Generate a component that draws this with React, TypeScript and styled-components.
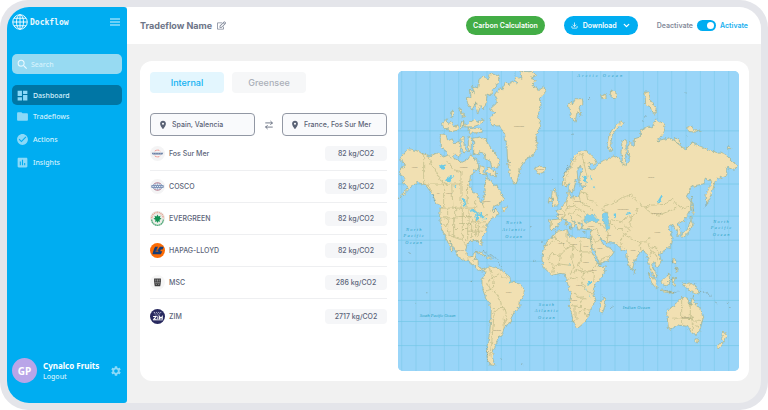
import React, { useState } from "react";
import styled, { createGlobalStyle } from "styled-components";
import { ArrowRightLeft, ChevronDown, Download } from "lucide-react";
import {
  MdAssessment,
  MdCheckCircle,
  MdDashboard,
  MdFolder,
  MdLocationOn,
  MdSearch,
  MdSettings,
} from "react-icons/md";
import { FaRegEdit } from "react-icons/fa";

const Global = createGlobalStyle`
  *, *::before, *::after { box-sizing: border-box; }
  body { margin: 0; background: #fff; font-family: Inter, "Liberation Sans", sans-serif; color: #5b6478; }
  button, input { font: inherit; color: inherit; margin: 0; }
  button { border: 0; padding: 0; background: none; cursor: pointer; }
  a { color: inherit; text-decoration: none; }
  svg { display: block; flex: none; }
`;

const Frame = styled.div`
  min-height: 100vh;
  padding: 7px;
  display: flex;
  border-radius: 28px;
  background: #e4e5ea;
`;

const Screen = styled.div`
  flex: 1;
  display: flex;
  border-radius: 22px;
  overflow: hidden;
  background: #f1f1f1;
`;

const Sidebar = styled.aside`
  width: 120px;
  flex: none;
  display: flex;
  flex-direction: column;
  padding: 5px;
  border-radius: 0 3px 3px 0;
  background: #00adf1;
  color: #d3f1fd;
  font-family: "Noto Sans", "Open Sans", sans-serif;
  font-size: 7px;
  font-weight: 500;
`;

const BrandRow = styled.div`
  display: flex;
  align-items: center;
  height: 20px;
  padding-right: 2px;
`;

const Brand = styled.a`
  flex: 1;
  display: flex;
  align-items: center;
  gap: 2px;
  color: #e9f8fe;
  font-family: "DejaVu Sans Mono", monospace;
  font-size: 8px;
  font-weight: 700;
`;

const IconButton = styled.button`
  display: flex;
  align-items: center;
  justify-content: center;
`;

const SearchBox = styled.label`
  display: flex;
  align-items: center;
  gap: 2px;
  height: 20px;
  margin-top: 22px;
  padding: 0 4px;
  border-radius: 5px;
  background: #97daf2;
  color: #e9f8fe;
`;

const SearchInput = styled.input`
  flex: 1;
  min-width: 0;
  border: 0;
  padding: 0;
  outline: 0;
  background: none;
  &::placeholder { color: #d6f3fd; opacity: 1; }
`;

const Nav = styled.nav`
  display: flex;
  flex-direction: column;
  margin-top: 11px;
`;

const NavLink = styled.a<{ $active?: boolean }>`
  display: flex;
  align-items: center;
  gap: 4px;
  height: ${(p) => (p.$active ? 20 : 23)}px;
  padding: 0 4px;
  border-radius: 5px;
  background: ${(p) => (p.$active ? "#0076a5" : "transparent")};
  svg { color: #8bd9f8; }
`;

const Account = styled.div`
  display: flex;
  align-items: center;
  gap: 6px;
  margin-top: auto;
  margin-bottom: 15px;
`;

const Avatar = styled.span`
  width: 25px;
  height: 25px;
  flex: none;
  border-radius: 50%;
  display: flex;
  align-items: center;
  justify-content: center;
  background: #b9a5e8;
  color: #fff;
  font-size: 10px;
  font-weight: 700;
`;

const AccountText = styled.div`
  flex: 1;
  display: flex;
  flex-direction: column;
  line-height: 11px;
  white-space: nowrap;
  strong { color: #fff; font-size: 8px; font-weight: 700; }
`;

const Content = styled.div`
  flex: 1;
  min-width: 0;
  display: flex;
  flex-direction: column;
`;

const TopBar = styled.header`
  display: flex;
  align-items: center;
  height: 37px;
  padding: 0 13px;
  background: #fff;
`;

const Title = styled.h1`
  margin: 0 5px 0 0;
  font-size: 9px;
  font-weight: 700;
  color: #6d7588;
`;

const Actions = styled.div`
  display: flex;
  align-items: center;
  gap: 19px;
  margin-left: auto;
`;

const PillButton = styled.button<{ $color: string; $pad: number }>`
  display: flex;
  align-items: center;
  gap: 5px;
  height: 19px;
  padding: 0 ${(p) => p.$pad}px;
  border-radius: 10px;
  background: ${(p) => p.$color};
  color: #fff;
  font-size: 7px;
  font-weight: 600;
`;

const Toggle = styled.label`
  display: flex;
  align-items: center;
  gap: 4px;
  font-size: 7px;
  font-weight: 600;
  color: #858c9b;
`;

const Switch = styled.input`
  appearance: none;
  display: flex;
  align-items: center;
  width: 19px;
  height: 11px;
  padding: 0 2px;
  border-radius: 6px;
  background: #c9cdd5;
  &::before { content: ""; width: 7px; height: 7px; border-radius: 50%; background: #fff; }
  &:checked { background: #00adf1; justify-content: flex-end; }
`;

const ActiveWord = styled.span`
  color: #19b0ef;
`;

const Card = styled.main`
  flex: 1;
  display: grid;
  grid-template-columns: 237fr 341fr;
  gap: 11px;
  margin: 17px 12px 22px 13px;
  padding: 10px;
  border-radius: 12px;
  background: #fff;
`;

const Panel = styled.section`
  display: flex;
  flex-direction: column;
  min-width: 0;
`;

const Tabs = styled.div`
  display: flex;
  gap: 8px;
  padding-top: 1px;
`;

const Tab = styled.button<{ $on: boolean }>`
  width: 74px;
  height: 21px;
  border-radius: 4px;
  background: ${(p) => (p.$on ? "#e3f6fe" : "#f6f7f8")};
  color: ${(p) => (p.$on ? "#12b1f2" : "#abb0b9")};
  font-size: 9px;
  font-weight: 500;
`;

const Route = styled.div`
  display: flex;
  align-items: center;
  justify-content: space-between;
  gap: 8px;
  margin-top: 20px;
  color: #596275;
`;

const Field = styled.label`
  flex: 0 1 105px;
  min-width: 0;
  display: flex;
  align-items: center;
  gap: 4px;
  height: 23px;
  padding: 0 7px;
  border: 1px solid #9298a4;
  border-radius: 4px;
  background: #f9fafc;
`;

const FieldInput = styled.input`
  flex: 1;
  min-width: 0;
  border: 0;
  padding: 0;
  outline: 0;
  background: none;
  font-size: 7px;
  font-weight: 500;
`;

const Table = styled.table`
  width: 100%;
  margin-top: 2px;
  border-collapse: collapse;
  font-size: 7px;
  font-weight: 500;
`;

const Row = styled.tr`
  height: 32px;
  border-bottom: 1px solid #eeeff1;
  &:last-child { height: 37px; border-bottom: 0; }
`;

const CarrierCell = styled.th`
  padding: 0;
  font-weight: 500;
  text-align: left;
`;

const Carrier = styled.span`
  display: flex;
  align-items: center;
  gap: 4px;
`;

const ValueCell = styled.td`
  padding: 0;
`;

const Value = styled.span`
  display: flex;
  align-items: center;
  justify-content: center;
  width: 62px;
  height: 15px;
  margin-left: auto;
  border-radius: 4px;
  background: #f5f6f8;
`;

const MapFrame = styled.figure`
  margin: 0;
  min-width: 0;
  border-radius: 5px;
  overflow: hidden;
  background: #99d5f8;
  svg { width: 100%; height: 100%; }
`;

const Globe = () => (
  <svg width="16" height="16" viewBox="0 0 32 32" fill="none" stroke="#fff" strokeWidth="1.8">
    <circle cx="16" cy="16" r="14.5" />
    <ellipse cx="16" cy="16" rx="7" ry="14.5" />
    <path d="M16 1.5v29M1.5 16h29M4 8.5h24M4 23.5h24" />
  </svg>
);

const Burger = () => (
  <svg width="10" height="8" viewBox="0 0 10 8" stroke="#d8f3fe" strokeWidth="1.2">
    <path d="M0 1h10M0 4h10M0 7h10" />
  </svg>
);

const logos: Record<string, React.ReactNode> = {
  fos: (
    <>
      <circle cx="22" cy="22" r="22" fill="#f4f4f5" />
      <path d="M14 15q8-6 16 0M14 29q8 6 16 0" fill="none" stroke="#ee7b72" strokeWidth="2.6" strokeDasharray="6 2" />
      <path d="M5 20h34l-3 5H8z" fill="#5b739c" />
      <path d="M9 22.5h27" stroke="#dfe5ef" strokeWidth="1.4" strokeDasharray="3 2" />
    </>
  ),
  cosco: (
    <>
      <circle cx="22" cy="22" r="22" fill="#f4f4f5" />
      <ellipse cx="22" cy="22" rx="14" ry="11" fill="#dfe6f1" stroke="#7f94b8" strokeWidth="2" />
      <path d="M12 14q10-7 20 0M12 30q10 7 20 0" fill="none" stroke="#e78d8f" strokeWidth="2.2" />
      <path d="M15 12v20M22 11v22M29 12v20" stroke="#7f94b8" strokeWidth="1.5" />
      <path d="M4 18h36v8H4z" fill="#6680aa" />
      <path d="M7 22h30" stroke="#e7ecf5" strokeWidth="3" strokeDasharray="4 2.5" />
    </>
  ),
  evergreen: (
    <>
      <circle cx="22" cy="22" r="22" fill="#eceee8" />
      <path d="M5 21a17 17 0 0 1 34 0" fill="none" stroke="#e8a598" strokeWidth="5" strokeDasharray="3 2" />
      <path d="M5 25a17 17 0 0 0 34 0" fill="none" stroke="#5aae82" strokeWidth="4" strokeDasharray="5 1" />
      <path d="m22 10 3 6 6-2-2 6 5 3-6 3 1 6-5-2-2 6-2-6-5 2 1-6-6-3 5-3-2-6 6 2z" fill="#149253" />
    </>
  ),
  hapag: (
    <>
      <circle cx="22" cy="22" r="22" fill="#fb6b05" />
      <path d="M15 11h9l-4 8h3l-3 6h3l-3 8H7l2-7 3-9zM29 11h11l-3 8h-5l-2 5h6l-4 9H19l3-9 3-7z" fill="#173e78" />
      <path d="m25 10-8 15h8" fill="none" stroke="#fb6b05" strokeWidth="1.4" />
    </>
  ),
  msc: (
    <>
      <circle cx="22" cy="22" r="22" fill="#f6f6f6" />
      <path d="M12 10h20v12l-2 11H14l-2-11z" fill="#3c3c3d" />
      <path d="M17 13v6m5-6v6m5-6v6M13 23h18M17 28h3m4 0h3" stroke="#e2e2e2" strokeWidth="1.5" />
    </>
  ),
  zim: (
    <>
      <circle cx="22" cy="22" r="22" fill="#28295f" />
      <path d="M11 10h4m3 0h3m3 0h3m3 0h3M13 14h3m4 0h3m4 0h3M16 18h3m4 0h3" stroke="#d9dbec" strokeWidth="2.4" />
      <path d="M9 22h9l-7 8h8M23 31v-10M28 31v-9l4 5 4-5v9" fill="none" stroke="#fff" strokeWidth="3" />
      <path d="M9 32h28" stroke="#fff" strokeWidth="2.4" />
    </>
  ),
};

const Logo = ({ id }: { id: string }) => (
  <svg width="15" height="15" viewBox="0 0 44 44" aria-hidden="true">
    {logos[id]}
  </svg>
);

const land = [
  // North America
  "M28 325L45 318 30 300 40 280 58 268 75 272 95 280 118 290 140 280 160 292 175 286 195 298 215 308 232 300 242 285 250 298 262 300 265 325 250 335 240 352 236 375 245 395 262 405 272 430 278 433 278 415 285 395 282 370 288 352 300 362 310 378 318 372 328 395 340 415 328 432 310 440 302 456 318 448 326 462 310 472 298 480 290 498 286 515 273 533 275 558 268 552 263 541 250 542 232 548 226 568 232 587 245 590 252 578 260 580 252 597 263 601 264 619 275 629 285 627 282 634 268 631 255 622 240 608 224 602 205 590 192 568 178 540 188 572 182 572 168 535 155 512 150 490 148 470 150 443 135 422 120 395 105 375 85 368 68 372 60 385 42 403 22 418 45 393 52 380 36 370 44 356 28 342Z",
  // South America
  "M285 628L295 618 310 622 330 628 345 640 358 650 362 665 385 672 403 685 400 705 390 720 388 742 372 755 362 775 352 797 342 800 337 820 325 835 318 850 310 868 306 890 314 916 300 914 290 890 290 860 298 820 302 770 303 740 285 710 275 682 275 660 282 645Z",
  // Greenland
  "M298 150L318 132 316 105 330 85 336 95 345 68 358 78 365 65 380 74 372 47 395 60 392 34 425 34 438 48 420 58 438 62 425 78 444 92 460 80 466 96 450 115 452 140 442 170 450 195 438 230 440 262 430 285 405 300 390 325 380 368 370 370 360 350 352 310 350 265 342 218 325 200 305 195 298 178 314 160Z",
  // Canadian archipelago
  "M240 92L252 100 246 78 262 86 266 60 280 48 290 62 300 42 325 50 325 70 308 90 302 108 290 104 288 125 280 150 270 142 262 164 256 130 245 152 232 132 228 115 242 112Z",
  "M218 188L230 196 252 180 262 188 278 178 276 192 248 202 222 202Z",
  "M232 207L272 206 276 218 240 221Z",
  "M250 236L270 232 290 244 300 266 314 280 326 302 322 325 304 322 300 305 284 298 286 284 268 276 262 288 250 280Z",
  "M150 226L168 228 172 244 186 238 190 250 206 246 210 270 208 292 192 286 182 296 164 272 150 262Z",
  "M212 236L222 232 220 252 230 274 220 280 212 262ZM234 232L244 236 242 268 234 276Z",
  "M156 190L170 178 172 192 186 188 190 202 202 196 204 212 180 216 170 206 160 208Z",
  "M205 144L216 150 212 160 226 168 216 172ZM182 154L190 152 188 172 180 170ZM212 190L220 186 218 206 210 208Z",
  "M270 318L282 322 278 336 290 346 276 344 266 334ZM296 322L318 340 318 352 300 344 284 336Z",
  "M336 448L348 438 346 452 336 456Z",
  // Iceland, Svalbard and the Russian Arctic islands
  "M433 325L450 318 463 325 460 338 445 343Z",
  "M534 132L544 126 546 136 556 118 576 118 578 132 566 142 572 168 560 158 554 188 540 170Z",
  "M632 110L644 104 648 114 636 120ZM660 92L672 96 684 104 674 118 662 112Z",
  "M764 98L776 98 780 122 800 150 794 164 784 158 780 142 766 136Z",
  "M695 184L698 190 674 214 664 234 660 258 668 272 656 272 650 256 656 226 670 204Z",
  "M892 204L904 200 912 212 930 214 920 218 896 216ZM1012 262L1022 262 1020 270 1012 270Z",
  // Britain and Ireland
  "M486 392L496 388 498 404 506 430 500 438 482 440 490 424 484 410ZM476 414L486 412 484 426 474 430Z",
  // Eurasia
  "M478 480L505 478 498 454 512 448 518 435 530 422 530 398 538 396 540 412 565 410 570 395 588 378 570 380 565 360 575 330 570 320 560 336 562 352 555 368 552 388 544 400 536 388 536 372 524 382 516 374 518 350 535 325 550 290 570 272 590 274 612 294 620 308 612 318 596 308 598 326 612 330 622 314 640 302 670 290 690 298 700 322 692 280 695 245 706 240 708 285 704 318 717 302 712 262 718 248 732 262 732 238 750 232 752 212 775 200 786 202 796 178 818 192 825 204 818 222 800 244 835 235 862 252 885 270 905 250 930 260 965 275 1005 285 1040 318 1032 332 1005 322 1010 345 975 362 966 395 950 434 947 405 964 366 945 355 940 372 905 380 888 410 902 426 900 450 885 478 864 492 872 520 864 530 856 505 840 495 834 502 848 535 840 560 820 575 807 580 813 605 800 622 790 608 784 614 800 648 792 652 778 620 772 592 760 570 750 575 732 602 725 630 715 615 708 575 695 568 675 550 650 548 635 538 622 524 640 555 655 562 672 575 655 600 628 612 615 580 600 550 600 530 605 510 580 508 574 492 566 488 574 510 564 510 555 487 540 470 556 494 548 502 530 480 515 478 500 498 492 510 480 508Z",
  // Africa
  "M495 515L530 510 536 528 556 536 566 530 600 537 605 575 618 602 626 620 648 618 642 640 618 668 608 690 616 722 600 750 585 785 565 802 554 800 546 770 537 735 542 700 528 660 525 642 510 640 485 646 462 624 455 600 457 575 470 545 488 532Z",
  "M642 712L646 728 636 762 628 754 630 732Z",
  // Australia, Tasmania and New Zealand
  "M828 750L855 732 862 722 875 712 892 714 892 726 902 734 906 708 915 730 932 748 938 775 928 812 915 822 900 812 892 796 885 798 862 794 838 808 834 800Z",
  "M914 836L924 836 922 848 914 846ZM997 814L1010 826 1002 846 994 838ZM994 844L1000 850 984 866 978 860Z",
  // South-East Asia
  "M774 640L790 655 804 682 798 686 784 668ZM812 664L836 642 838 660 830 678 816 674ZM810 690L830 692 850 696 850 700 812 694ZM845 656L856 654 850 664 856 678 848 678Z",
  "M876 668L890 674 904 670 918 682 928 702 910 698 898 692 890 682 878 676ZM848 592L856 600 856 612 848 606ZM854 620L864 626 860 638Z",
  // Japan, Sakhalin and Sri Lanka
  "M905 452L916 458 906 468ZM904 470L908 490 896 516 884 526 876 532 874 524 892 508ZM904 412L910 440 906 452 904 430ZM732 628L736 636 732 640Z",
  // Caribbean
  "M255 574L275 578 288 588 272 584ZM290 590L305 592 300 598 290 596Z",
  // Sicily, Sardinia, Crete and Novosibirsk coast
  "M536 502L546 502 544 508ZM526 484L530 484 530 498 524 496ZM572 516L582 516ZM852 236L866 238 868 252 856 250Z",
];

const borders = [
  "M100 280V372L116 380 124 396M116 290L122 312 134 330 150 362 172 374M172 304L190 330 212 336 212 372M106 373H212M160 373V445M184 373L188 445M212 372V445M232 373L230 445M150 445H254L262 458 280 470 296 462M256 420L256 445M276 433L282 446",
  "M172 445V470M196 445V470M216 445V482M236 448V500M150 474H206M206 470H244M206 494H246M190 474V532M158 490L176 514V526M172 474V500M216 482V540M232 500V542M244 470V534M256 478V530M190 506H232M232 514H276M176 526L196 534 212 538 226 556M262 474L266 500 284 502M264 500V528M246 486H286",
  "M232 600L240 592M252 600L246 606M296 622L306 652 292 668 300 688 282 696M310 652L328 640 336 652 356 650M300 688L318 700 330 720 334 742 344 746 352 774 342 792M304 740L316 752 334 742M312 752L308 800 304 850 298 890M338 772L342 800M306 652L310 680 300 688",
  "M512 448L524 464 516 478M530 420L528 444 524 464M528 444L546 440 556 450 548 462 534 464M548 412L550 438 566 442M566 408L572 430 590 436 606 452M570 396L588 400 592 420 610 424 622 440M556 450L578 452 586 464M556 464L572 470 576 488M524 382L528 350 548 310 562 288 578 282M574 280L582 316 590 350 586 374M484 482L482 506M505 478L514 482",
  "M636 456L642 438 668 432 694 414 720 406 744 428 762 442 786 436 824 434 846 418 862 438 876 444 896 440M762 442L780 458 806 466 836 454 858 442M636 456L656 458M636 482L656 494 666 480 690 488 706 476 730 466 744 446M662 490L680 506 692 506 702 524 720 512 700 494M650 548L654 520 640 500 620 486M695 568L690 540 704 524M702 524L722 536 744 546 770 546 780 530M748 546L752 572M772 548L780 572 796 580 804 604M784 572L780 594M780 560L800 566 806 582M604 512L618 504 626 522M602 530L618 546 628 540M628 612L636 594 656 590M730 466L716 490 726 506",
  "M486 530L498 536 470 556 458 560M498 536L530 566 510 586 486 580 470 600M530 512V546L548 556M530 566L548 558 570 576 572 540M572 576H604M548 558L544 600 552 620 540 640M510 586L506 612 492 616 486 642M472 600L492 616M570 576L572 600 564 616 580 636 604 634 620 608M506 612L540 616M540 640L562 630 580 636M528 660L548 652 562 656M604 634L612 646 610 666M580 636L576 664 584 690 608 700M542 700H556L562 712 584 710M540 736L570 740 572 716 590 716M554 736V766L562 778 546 784M562 760L580 748 598 750M580 748L590 770",
  "M874 714V790M874 774H906M900 728V774L906 782 936 784M906 774V810M846 774H906M906 790L926 800",
];

const lakes =
  "M148 318l10-6 10 4-8 6-2 8-10-2zM168 358l12-8 12 0-8 8-4 10-12-2zM186 378l12-2-2 8zM216 414l8 2 4 22-6 4zM240 452l12-2 12 10-12 2zM254 464l8-2 2 18-6 2zM266 462l10-2 2 14-6 2zM276 478l14-4 0 4zM578 350l6-2 6 8-2 14-6-2zM600 350l4 0 2 12-4 2zM538 372l4 0 0 10zM610 378l4 4-2 4zM801 426l12-20 4 0-6 18-8 8zM704 464l18-6-2 4-14 4zM594 664l8-2 0 10-8 2zM586 680l4 14-2 0zM596 700l4 14-2 0zM670 462l8-2 2 8-8 4zM534 612l4 2-2 4zM358 664l6 0 0 6-6 0z";

const specks =
  "M120 395l6 14 4 10 8 12M22 418l-2 4M290 860l2 30 4 14 8 10M330 896l8 2M394 910l6 4M55 578l6 6M244 664h4M420 500l6 2M428 600l8 2M452 546l8 2M660 742l12-2M828 692l22 6 14-2M842 660l6-10M844 600l10 16 6 12M928 690l24 10 14 14M972 720l8 12M1008 730h8M1016 744h8M914 668l6 4M940 448l10-20M596 118h4M278 570l16 14 14 6 20 10M322 606l12 14M482 355l2 2M756 180l4 6M766 168l2 6M546 224h2M890 225l4 4M886 100h2M438 232l-4 20M354 300l6 20M518 350l8-14 10-20M544 502l4 0M634 705l4 4M316 448l-6 12M76 730h3M108 698h3";

const meridians = Array.from({ length: 24 }, (_, i) => 34 + Math.round(i * 42.65));
const parallels = [214, 373, 469, 541, 604, 663, 721, 784, 856];

const seaNames: [number, number, string, number][] = [
  [628, 53, "Arctic Ocean", 6],
  [70, 512, "North", 4],
  [70, 532, "Pacific", 4],
  [70, 552, "Ocean", 4],
  [370, 493, "North", 4],
  [370, 513, "Atlantic", 4],
  [370, 533, "Ocean", 4],
  [142, 770, "South Pacific Ocean", 0],
  [468, 737, "South", 4],
  [468, 757, "Atlantic", 4],
  [468, 777, "Ocean", 4],
  [738, 748, "Indian Ocean", 1],
  [992, 488, "North", 4],
  [992, 508, "Pacific", 4],
  [992, 528, "Ocean", 4],
];

const places: [number, number, string][] = [
  [386, 202, "Greenland"], [782, 354, "Russia"], [801, 520, "China"], [355, 699, "Brazil"],
  [72, 326, "Alaska"], [220, 324, "Canada"], [698, 452, "Kazakhstan"], [798, 462, "Mongolia"],
  [728, 572, "India"], [512, 552, "Algeria"], [552, 556, "Libya"], [586, 562, "Egypt"],
  [586, 610, "Sudan"], [566, 678, "Congo"], [882, 774, "Australia"], [318, 812, "Argentina"],
  [210, 572, "Mexico"], [628, 568, "Saudi"], [656, 528, "Iran"], [602, 502, "Turkey"],
  [606, 634, "Ethiopia"], [550, 722, "Angola"], [450, 332, "Iceland"], [144, 404, "BC"],
  [175, 404, "Alberta"], [290, 428, "Quebec"], [508, 466, "France"], [560, 428, "Poland"],
];

const MapLabel = styled.text<{ $size: number; $fill: string }>`
  font-family: "Liberation Serif", serif;
  font-style: italic;
  font-size: ${(p) => p.$size}px;
  fill: ${(p) => p.$fill};
  text-anchor: middle;
`;

const WorldMap = () => (
  <svg viewBox="23 35 1023 897" preserveAspectRatio="none" role="img" aria-label="World map">
    <defs>
      <filter id="coast" x="0" y="0" width="1060" height="940" filterUnits="userSpaceOnUse" colorInterpolationFilters="sRGB">
        <feTurbulence type="fractalNoise" baseFrequency="0.09" numOctaves="3" seed="4" />
        <feDisplacementMap in="SourceGraphic" scale="13" xChannelSelector="R" yChannelSelector="G" />
      </filter>
    </defs>
    <rect x="23" y="35" width="1023" height="897" fill="#99d5f8" />
    <g stroke="#71c5e6" strokeWidth="2">
      {meridians.map((x) => (
        <path key={x} d={`M${x} 35V932`} strokeOpacity="0.65" />
      ))}
      {parallels.map((y) => (
        <path key={y} d={`M23 ${y}H1046`} />
      ))}
    </g>
    <g filter="url(#coast)" strokeLinejoin="round">
      <g fill="#f1e0b2" stroke="#9caf8c" strokeWidth="2">
        {land.map((d) => (
          <path key={d} d={d} />
        ))}
      </g>
      <g fill="none" stroke="#b3b380" strokeWidth="1.8">
        {borders.map((d) => (
          <path key={d} d={d} />
        ))}
      </g>
      <path
        d="M586 466l10-6 6 8 8-8 2 8 12 12-4 6-18-2-14 4-8-6zM638 464l8-6 10 2-6 8 4 14 4 18-2 10-8 0-4-18-6-10z"
        fill="#80cfee"
        stroke="#94b9a0"
        strokeWidth="1.5"
      />
      <path d={lakes} fill="#6dcbe6" />
      <path d={specks} fill="none" stroke="#7f9c94" strokeWidth="2.5" strokeDasharray="4 3" />
    </g>
    {seaNames.map(([x, y, name, spacing]) => (
      <MapLabel key={`${x}-${y}`} x={x} y={y} $size={13} $fill="#249fc2" dx={name.split("").map((_, i) => (i ? spacing : 0)).join(" ")}>
        {name}
      </MapLabel>
    ))}
    {places.map(([x, y, name]) => (
      <MapLabel key={name} x={x} y={y} $size={7} $fill="#8f8868">
        {name}
      </MapLabel>
    ))}
  </svg>
);

const carriers = [
  { id: "fos", name: "Fos Sur Mer", value: "82 kg/CO2" },
  { id: "cosco", name: "COSCO", value: "82 kg/CO2" },
  { id: "evergreen", name: "EVERGREEN", value: "82 kg/CO2" },
  { id: "hapag", name: "HAPAG-LLOYD", value: "82 kg/CO2" },
  { id: "msc", name: "MSC", value: "286 kg/CO2" },
  { id: "zim", name: "ZIM", value: "2717 kg/CO2" },
];

const navItems = [
  { label: "Dashboard", Icon: MdDashboard },
  { label: "Tradeflows", Icon: MdFolder },
  { label: "Actions", Icon: MdCheckCircle },
  { label: "Insights", Icon: MdAssessment },
];

export default function App() {
  const [tab, setTab] = useState("Internal");
  return (
    <>
      <Global />
      <Frame>
        <Screen>
          <Sidebar>
            <BrandRow>
              <Brand href="#home">
                <Globe />
                Dockflow
              </Brand>
              <IconButton aria-label="Menu">
                <Burger />
              </IconButton>
            </BrandRow>
            <SearchBox>
              <MdSearch size={13} />
              <SearchInput type="text" placeholder="Search" aria-label="Search" />
            </SearchBox>
            <Nav>
              {navItems.map(({ label, Icon }, i) => (
                <NavLink key={label} href={`#${label.toLowerCase()}`} $active={i === 0}>
                  <Icon size={13} />
                  {label}
                </NavLink>
              ))}
            </Nav>
            <Account>
              <Avatar>GP</Avatar>
              <AccountText>
                <strong>Cynalco Fruits</strong>
                <a href="#logout">Logout</a>
              </AccountText>
              <IconButton aria-label="Settings">
                <MdSettings size={12} color="#8bd9f8" />
              </IconButton>
            </Account>
          </Sidebar>
          <Content>
            <TopBar>
              <Title>Tradeflow Name</Title>
              <IconButton aria-label="Edit name">
                <FaRegEdit size={9} color="#7c8496" />
              </IconButton>
              <Actions>
                <PillButton $color="#43ad46" $pad={7}>Carbon Calculation</PillButton>
                <PillButton $color="#00adf1" $pad={7}>
                  <Download size={7} strokeWidth={2.5} />
                  Download
                  <ChevronDown size={9} strokeWidth={3.5} />
                </PillButton>
                <Toggle>
                  Deactivate
                  <Switch type="checkbox" role="switch" defaultChecked />
                  <ActiveWord>Activate</ActiveWord>
                </Toggle>
              </Actions>
            </TopBar>
            <Card>
              <Panel>
                <Tabs role="tablist">
                  {["Internal", "Greensee"].map((name) => (
                    <Tab key={name} role="tab" aria-selected={tab === name} $on={tab === name} onClick={() => setTab(name)}>
                      {name}
                    </Tab>
                  ))}
                </Tabs>
                <Route>
                  <Field>
                    <MdLocationOn size={10} />
                    <FieldInput type="text" aria-label="Origin" defaultValue="Spain, Valencia" />
                  </Field>
                  <IconButton aria-label="Swap ports">
                    <ArrowRightLeft size={10} strokeWidth={2} />
                  </IconButton>
                  <Field>
                    <MdLocationOn size={10} />
                    <FieldInput type="text" aria-label="Destination" defaultValue="France, Fos Sur Mer" />
                  </Field>
                </Route>
                <Table>
                  <tbody>
                    {carriers.map((c) => (
                      <Row key={c.id}>
                        <CarrierCell scope="row">
                          <Carrier>
                            <Logo id={c.id} />
                            {c.name}
                          </Carrier>
                        </CarrierCell>
                        <ValueCell>
                          <Value>{c.value}</Value>
                        </ValueCell>
                      </Row>
                    ))}
                  </tbody>
                </Table>
              </Panel>
              <MapFrame>
                <WorldMap />
              </MapFrame>
            </Card>
          </Content>
        </Screen>
      </Frame>
    </>
  );
}
